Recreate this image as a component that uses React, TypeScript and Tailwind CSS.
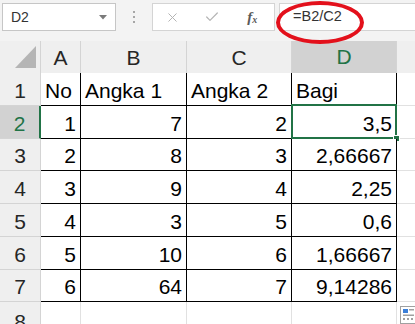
import React from 'react';
import { Check, X } from 'lucide-react';

const rows = [
    { n: 1, h: 'h-[33px]', cells: ['No', 'Angka 1', 'Angka 2', 'Bagi'], text: true },
    { n: 2, h: 'h-[33px]', cells: ['1', '7', '2', '3,5'] },
    { n: 3, h: 'h-[32px]', cells: ['2', '8', '3', '2,66667'] },
    { n: 4, h: 'h-[33px]', cells: ['3', '9', '4', '2,25'] },
    { n: 5, h: 'h-[33px]', cells: ['4', '3', '5', '0,6'] },
    { n: 6, h: 'h-[33px]', cells: ['5', '10', '6', '1,66667'] },
    { n: 7, h: 'h-[32px]', cells: ['6', '64', '7', '9,14286'] },
];

const cols = ['A', 'B', 'C', 'D'];
const gridCols = 'grid grid-cols-[41px_40px_106px_105px_105px_1fr]';

const Toolbar: React.FC = () => (
    <div className="relative flex h-[41px] items-start bg-[#f3f3f3]">
        {/* name box */}
        <div className="ml-[2px] mt-[3px] flex h-[28px] w-[114px] items-center justify-between border border-[#c6c6c6] bg-white pl-[8px] pr-[8px]">
            <span className="text-[14px] text-[#333]">D2</span>
            <svg width="8" height="5" viewBox="0 0 8 5">
                <polygon points="0,0 8,0 4,4.5" fill="#7a7a7a" />
            </svg>
        </div>
        <div className="mt-[3px] flex h-[28px] w-[36px] flex-col items-center justify-center gap-[3px]">
            <span className="h-[2px] w-[2px] bg-[#a6a6a6]" />
            <span className="h-[2px] w-[2px] bg-[#a6a6a6]" />
            <span className="h-[2px] w-[2px] bg-[#a6a6a6]" />
        </div>
        {/* cancel / enter / fx */}
        <div className="mt-[3px] flex h-[28px] w-[123px] items-center border border-[#d4d4d4] bg-white">
            <span className="flex w-[40px] justify-center text-[#b4b4b4]">
                <X size={15} strokeWidth={1.6} />
            </span>
            <span className="flex w-[38px] justify-center text-[#b4b4b4]">
                <Check size={16} strokeWidth={1.8} />
            </span>
            <span className="flex w-[44px] items-baseline justify-center font-['Liberation_Serif',serif] italic font-bold text-[#5a5a5a]">
                <span className="text-[15px]">f</span>
                <span className="relative top-[1px] text-[10px]">x</span>
            </span>
        </div>
        {/* formula input */}
        <div className="ml-[4px] mt-[3px] flex h-[28px] flex-1 items-center border-y border-l border-[#d4d4d4] bg-white pl-[13px]">
            <span className="text-[14.5px] text-[#333]">=B2/C2</span>
        </div>
        <div className="absolute left-[276px] top-[1px] h-[43px] w-[88px] rounded-[50%] border-[4px] border-[#e3101b]" />
    </div>
);

const HeaderRow: React.FC = () => (
    <div className={`${gridCols} h-[32px] text-[21px]`}>
        <div className="border-r border-b border-[#d4d4d4] bg-[#efefef]">
            <svg width="40" height="31" viewBox="0 0 40 31">
                <polygon points="15,27 36,27 36,5" fill="#b5b5b5" />
            </svg>
        </div>
        {cols.map((c) =>
            c === 'D' ? (
                <div
                    key={c}
                    className="flex items-center justify-center border-r border-b-2 border-r-[#d4d4d4] border-b-[#217346] bg-[#d2d2d2] text-[#217346]"
                >
                    {c}
                </div>
            ) : (
                <div
                    key={c}
                    className="flex items-center justify-center border-r border-b border-[#d4d4d4] bg-[#efefef] text-[#262626]"
                >
                    {c}
                </div>
            )
        )}
        <div className="border-b border-[#d4d4d4] bg-[#efefef]" />
    </div>
);

const App: React.FC = () => {
    return (
        <div className="relative h-[324px] w-[415px] overflow-hidden bg-[#f3f3f3] font-['Liberation_Sans',Arial,sans-serif]">
            <Toolbar />
            <HeaderRow />
            {rows.map((r) => (
                <div key={r.n} className={`${gridCols} ${r.h} text-[21px] leading-none`}>
                    {r.n === 2 ? (
                        <div className="flex items-end justify-center border-r-2 border-b border-r-[#217346] border-b-[#d4d4d4] bg-[#d2d2d2] pb-[4px] text-[#217346]">
                            {r.n}
                        </div>
                    ) : (
                        <div className="flex items-end justify-center border-r border-b border-[#d4d4d4] bg-[#efefef] pb-[4px] text-[#262626]">
                            {r.n}
                        </div>
                    )}
                    {r.cells.map((v, i) => (
                        <div
                            key={i}
                            className={`relative flex items-end border-r border-b border-black bg-white px-[4px] pb-[4px] text-black ${r.text ? 'justify-start' : 'justify-end'}`}
                        >
                            {v}
                            {r.n === 2 && i === 3 && (
                                <>
                                    <div className="absolute -top-[2px] -left-[1px] -right-[1px] -bottom-[1px] border-2 border-[#217346]" />
                                    <div className="absolute -right-[4px] -bottom-[4px] h-[7px] w-[7px] border border-white bg-[#217346]" />
                                </>
                            )}
                        </div>
                    ))}
                    <div className="border-b border-[#e1e1e1] bg-white" />
                </div>
            ))}
            {/* row 8, cut off */}
            <div className={`${gridCols} h-[22px] text-[21px] leading-none`}>
                <div className="flex justify-center border-r border-[#d4d4d4] bg-[#efefef] pt-[9px] text-[#262626]">8</div>
                <div className="border-r border-[#e1e1e1] bg-white" />
                <div className="border-r border-[#e1e1e1] bg-white" />
                <div className="border-r border-[#e1e1e1] bg-white" />
                <div className="border-r border-[#e1e1e1] bg-white" />
                <div className="bg-white" />
            </div>
            {/* quick analysis button */}
            <svg className="absolute left-[400px] top-[306px]" width="16" height="18" viewBox="0 0 16 18">
                <rect x="0.5" y="0.5" width="15" height="17" fill="#fff" stroke="#a0a0a0" />
                <rect x="3" y="3" width="5" height="4" fill="#3b7fd8" />
                <rect x="9" y="3" width="5" height="1.5" fill="#a0a0a0" />
                <rect x="3" y="8.5" width="11" height="1.5" fill="#a0a0a0" />
                <rect x="3" y="12" width="2" height="2" fill="#a0a0a0" />
                <rect x="7" y="12" width="2" height="2" fill="#a0a0a0" />
                <rect x="11" y="12" width="2" height="2" fill="#a0a0a0" />
            </svg>
        </div>
    );
};

export default App;
